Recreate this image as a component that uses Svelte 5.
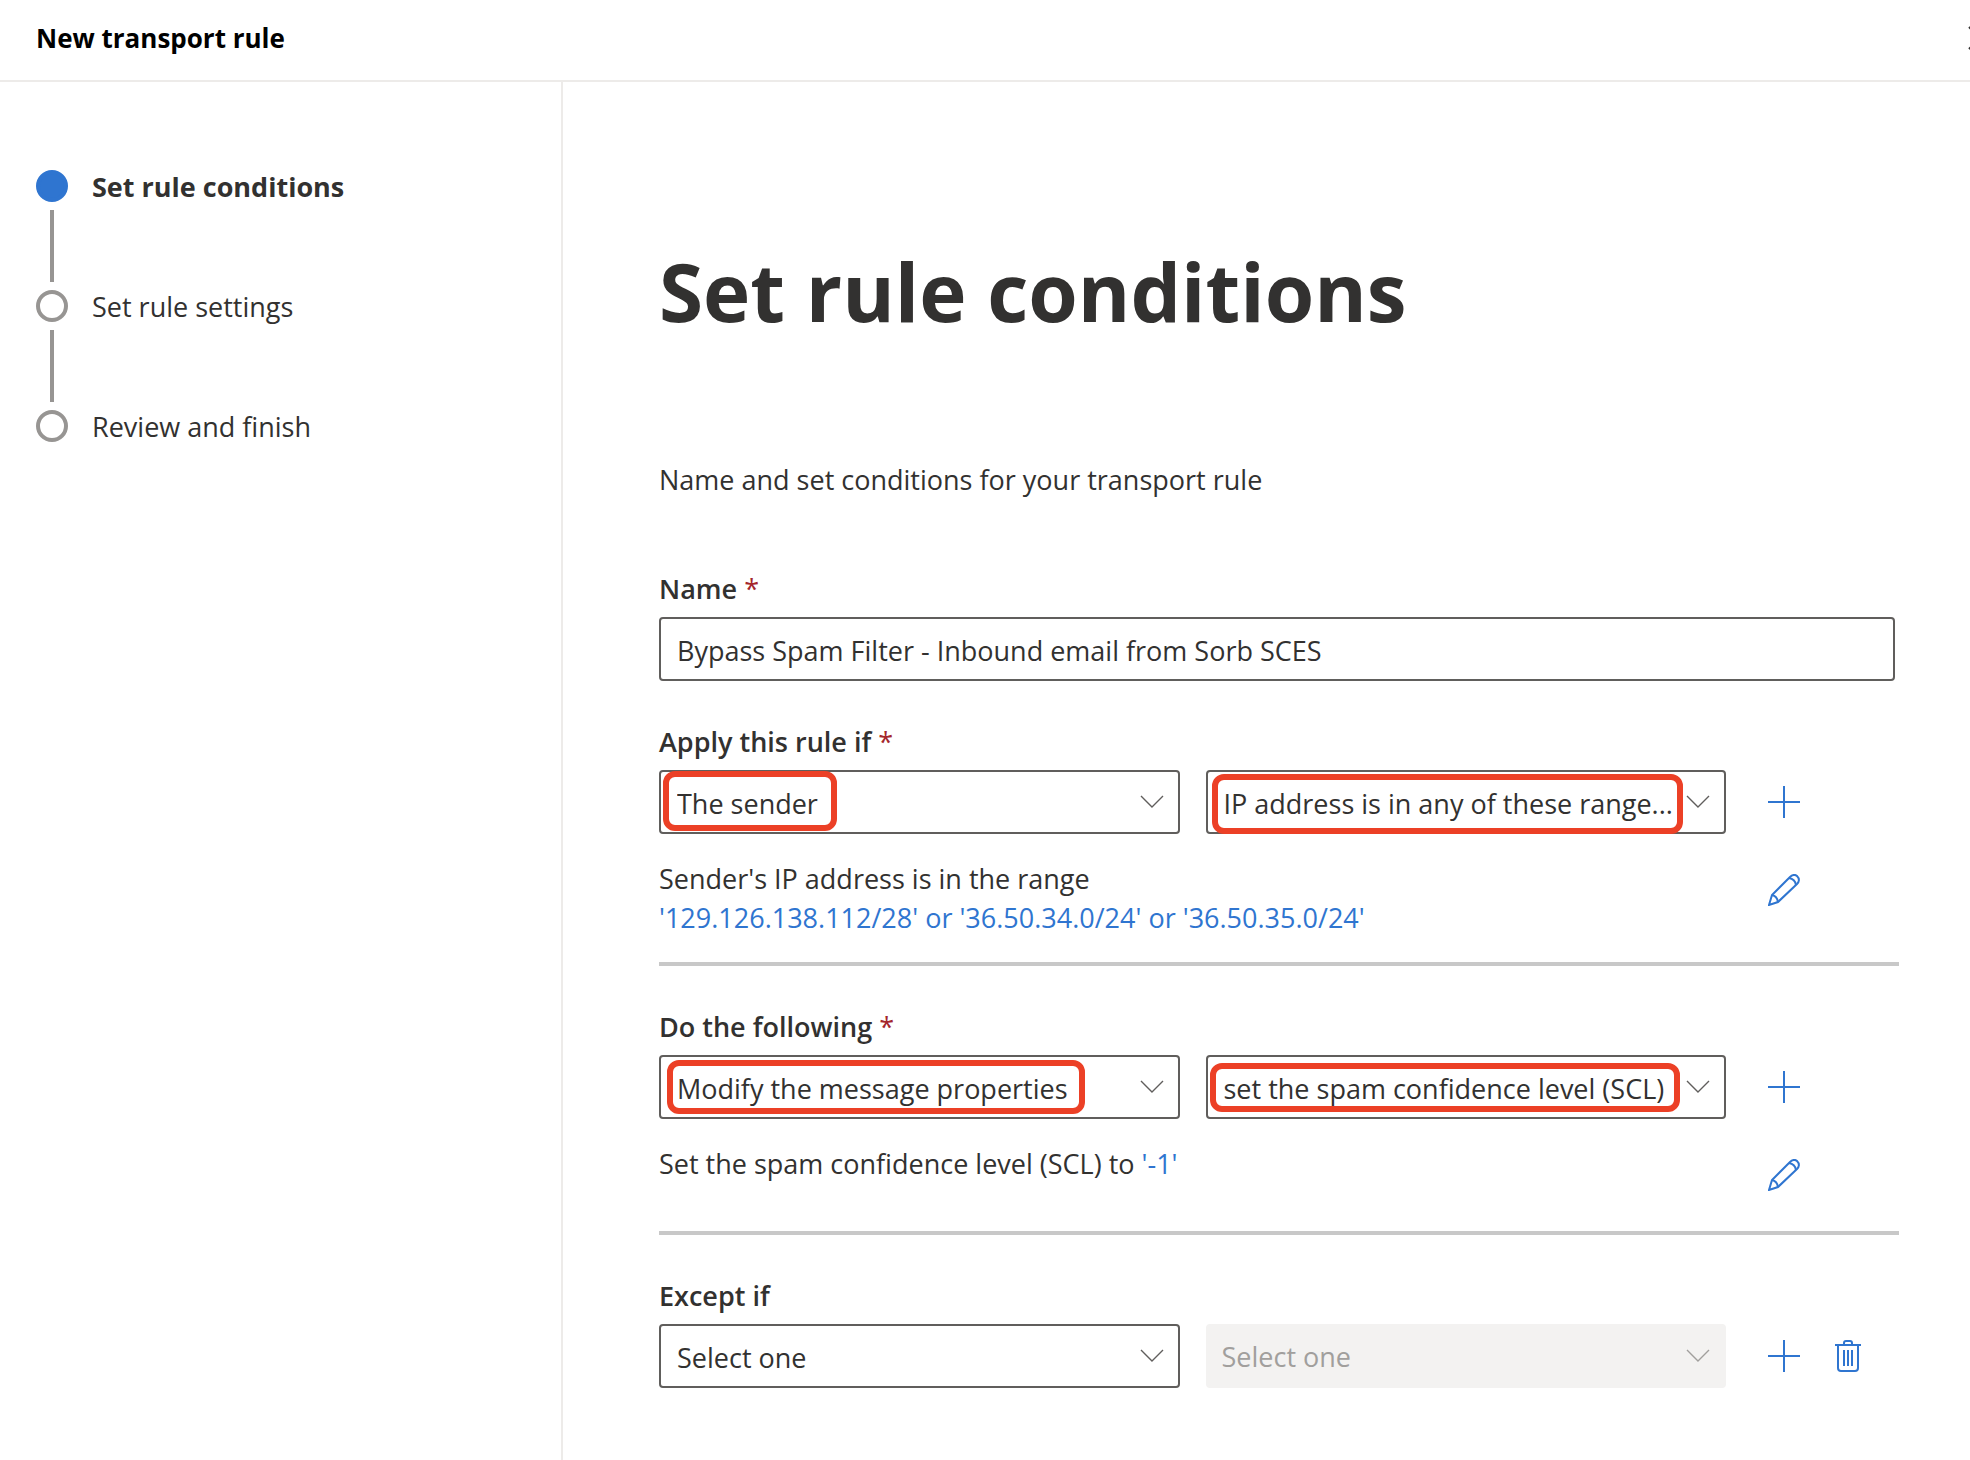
<script>
	let steps = [
		{ label: 'Set rule conditions', current: true },
		{ label: 'Set rule settings', current: false },
		{ label: 'Review and finish', current: false }
	]

	let name = 'Bypass Spam Filter - Inbound email from Sorb SCES'

	let sections = [
		{
			id: 'apply',
			title: 'Apply this rule if',
			required: true,
			first: 'The sender',
			second: 'IP address is in any of these range...',
			text: "Sender's IP address is in the range",
			link: "'129.126.138.112/28' or '36.50.34.0/24' or '36.50.35.0/24'",
			newLine: true
		},
		{
			id: 'action',
			title: 'Do the following',
			required: true,
			first: 'Modify the message properties',
			second: 'set the spam confidence level (SCL)',
			text: 'Set the spam confidence level (SCL) to',
			link: "'-1'",
			newLine: false
		},
		{
			id: 'except',
			title: 'Except if',
			required: false,
			first: 'Select one',
			second: 'Select one'
		}
	]
</script>

{#snippet chevron()}
	<svg class="chevron" viewBox="0 0 24 14" aria-hidden="true">
		<path d="M1 1L12 12L23 1" />
	</svg>
{/snippet}

<div class="page">
	<header>
		<h2>New transport rule</h2>
		<button class="close" aria-label="Close">
			<svg viewBox="0 0 24 24"><path d="M1 1L23 23M23 1L1 23" /></svg>
		</button>
	</header>

	<div class="body">
		<nav>
			<ol>
				{#each steps as step}
					<li class:current={step.current}>
						<span class="dot"></span>
						<span>{step.label}</span>
					</li>
				{/each}
			</ol>
		</nav>

		<main>
			<h1>Set rule conditions</h1>
			<p class="intro">Name and set conditions for your transport rule</p>

			<div class="name-field">
				<label for="name">Name <span class="star">*</span></label>
				<input id="name" type="text" bind:value={name} />
			</div>

			{#each sections as section}
				<section class={section.id}>
					<label for={section.id}>
						{section.title}
						{#if section.required}<span class="star">*</span>{/if}
					</label>
					<div class="row">
						<div class="dropdown">
							<select id={section.id}>
								<option>{section.first}</option>
							</select>
							{@render chevron()}
							{#if section.required}<span class="mark mark-first"></span>{/if}
						</div>
						<div class="dropdown">
							<select aria-label="{section.title} - detail" disabled={!section.required}>
								<option>{section.second}</option>
							</select>
							{@render chevron()}
							{#if section.required}<span class="mark mark-second"></span>{/if}
						</div>
						<div class="actions">
							<button aria-label="Add">
								<svg viewBox="0 0 32 32"><path d="M16 0V32M0 16H32" /></svg>
							</button>
							{#if !section.required}
								<button aria-label="Delete">
									<svg viewBox="0 0 32 32">
										<path d="M3 5H29M6 5V28Q6 31 9 31H23Q26 31 26 28V5M12 5V3Q12 1 14 1H18Q20 1 20 3V5M12 10V26M16 10V26M20 10V26" />
									</svg>
								</button>
							{/if}
						</div>
					</div>

					{#if section.text}
						<div class="row">
							<p class="summary">
								{section.text}
								{#if section.newLine}<br />{/if}
								<a href="#{section.id}">{section.link}</a>
							</p>
							<div class="actions edit">
								<button aria-label="Edit">
									<svg viewBox="0 0 32 32">
										<path d="M1 31L4 21L22 3C24 1 27 0 29 2C32 5 31 8 29 10L10 28Z" />
										<path d="M4 21Q9 22 10 28M21 4Q27 5 28 11" />
									</svg>
								</button>
							</div>
						</div>
						<hr />
					{/if}
				</section>
			{/each}
		</main>
	</div>
</div>

<style>
	:global(body) {
		margin: 0;
		overflow-x: hidden;
	}

	.page {
		display: flex;
		flex-direction: column;
		min-height: 100vh;
		background: #fff;
		color: #323130;
		font-family: 'Open Sans', 'Noto Sans', sans-serif;
		font-size: 27px;
		line-height: 39px;
	}

	h1, h2, p, ol {
		margin: 0;
		padding: 0;
	}

	header {
		display: flex;
		align-items: center;
		justify-content: space-between;
		height: 76px;
		padding: 0 0 4px 36px;
		border-bottom: 2px solid #edebe9;
		overflow: hidden;
	}
	h2 {
		color: #000;
		font-size: 26px;
		font-weight: 700;
	}

	button {
		display: block;
		flex: none;
		width: 32px;
		height: 32px;
		padding: 0;
		border: none;
		background: none;
		cursor: pointer;
	}
	button svg {
		display: block;
		width: 32px;
		height: 32px;
		fill: none;
		stroke: #2f75d0;
		stroke-width: 2;
	}
	/* the close button runs over the right edge of the panel */
	.close {
		display: flex;
		align-items: center;
		margin-right: -30px;
	}
	.close svg {
		width: 24px;
		height: 24px;
		stroke: #323130;
	}

	.body {
		display: flex;
		flex: 1;
	}

	nav {
		flex: none;
		box-sizing: border-box;
		width: 563px;
		padding: 88px 36px;
		border-right: 2px solid #edebe9;
	}
	ol {
		display: flex;
		flex-direction: column;
		gap: 88px;
		list-style: none;
	}
	li {
		position: relative;
		display: flex;
		align-items: center;
		gap: 24px;
		height: 32px;
	}
	li + li::before {
		content: '';
		position: absolute;
		left: 14px;
		bottom: 40px;
		width: 4px;
		height: 72px;
		background: #979593;
	}
	.dot {
		box-sizing: border-box;
		width: 32px;
		height: 32px;
		border: 4px solid #979593;
		border-radius: 50%;
	}
	.current {
		font-weight: 700;
	}
	.current .dot {
		border-color: #2f75d0;
		background: #2f75d0;
	}

	main {
		flex: 1;
		min-width: 0;
		padding: 153px 71px 72px 96px;
	}
	h1 {
		font-size: 80px;
		line-height: 112px;
		font-weight: 700;
	}
	.intro {
		margin-top: 113px;
	}

	label {
		display: block;
		margin-bottom: 9px;
		font-weight: 600;
	}
	.star {
		color: #a4262c;
		font-weight: 400;
	}

	.name-field {
		margin: 70px 4px 41px 0;
	}
	input, select {
		display: block;
		box-sizing: border-box;
		width: 100%;
		height: 64px;
		margin: 0;
		padding: 2px 16px 0;
		border: 2px solid #605e5c;
		border-radius: 4px;
		background: #fff;
		color: #323130;
		font: inherit;
	}
	select {
		appearance: none;
		padding-right: 44px;
	}
	select:disabled {
		padding: 0 44px 0 14px;
		border-color: #f3f2f1;
		background: #f3f2f1;
		color: #a19f9d;
		opacity: 1;
	}

	.row {
		display: grid;
		grid-template-columns: minmax(0, 1fr) minmax(0, 1fr) 147px;
		column-gap: 26px;
	}
	.dropdown {
		position: relative;
	}
	.chevron {
		position: absolute;
		top: 25px;
		right: 16px;
		width: 24px;
		height: 14px;
		fill: none;
		stroke: #605e5c;
		stroke-width: 1.4;
		pointer-events: none;
	}
	select:disabled + .chevron {
		stroke: #a19f9d;
	}
	.actions {
		display: flex;
		align-items: center;
		gap: 32px;
		padding-left: 16px;
	}

	/* red frames round the values to pick */
	.mark {
		position: absolute;
		box-sizing: border-box;
		border: 6px solid #ec4026;
		border-radius: 12px;
		pointer-events: none;
	}
	.apply .mark-first {
		top: 1px;
		left: 4px;
		width: 174px;
		height: 60px;
	}
	.apply .mark-second {
		top: 4px;
		left: 6px;
		width: 471px;
		height: 60px;
	}
	.action .mark-first {
		top: 5px;
		left: 8px;
		width: 418px;
		height: 54px;
	}
	.action .mark-second {
		top: 8px;
		left: 4px;
		width: 470px;
		height: 49px;
	}

	.summary {
		grid-column: 1 / 3;
		padding: 25px 0;
	}
	a {
		color: #2f75d0;
		text-decoration: none;
	}
	.edit {
		align-items: flex-start;
		height: 72px;
		padding-top: 40px;
	}
	hr {
		height: 4px;
		margin: 0 0 41px;
		border: none;
		background: #c8c8c8;
	}
</style>
